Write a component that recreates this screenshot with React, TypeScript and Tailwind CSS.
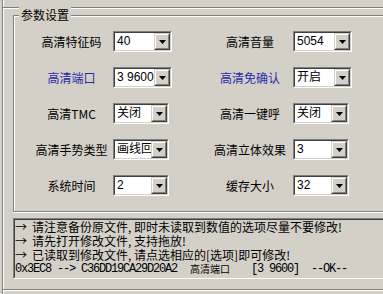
const cjk = "font-['Noto_Sans_CJK_SC',sans-serif]";

function Combo({ value, w }: { value: string; w: string }) {
  return (
    <div className={`${w} h-[21px] border border-t-[#808080] border-l-[#808080] border-b-white border-r-white`}>
      <div className="flex h-full border border-t-[#404040] border-l-[#404040] border-b-[#d4d0c8] border-r-[#d4d0c8] bg-white">
        <div className="flex-1 overflow-hidden whitespace-nowrap pl-[2px] text-[12px] leading-[17px] text-black font-['Liberation_Sans','Noto_Sans_CJK_SC',sans-serif]">
          {value}
        </div>
        <div className="w-[16px] h-full border border-t-[#d4d0c8] border-l-[#d4d0c8] border-b-[#404040] border-r-[#404040]">
          <div className="flex h-full items-center justify-center border border-t-white border-l-white border-b-[#808080] border-r-[#808080] bg-[#d4d0c8]">
            <svg width="7" height="4" viewBox="0 0 7 4">
              <polygon points="0,0 7,0 3.5,4" fill="#000" />
            </svg>
          </div>
        </div>
      </div>
    </div>
  );
}

function Label({ text, blue }: { text: string; blue?: boolean }) {
  return (
    <div
      className={`text-center text-[12px] leading-[21px] whitespace-nowrap ${cjk} ${
        blue ? "text-[#2a2aa8]" : "text-black"
      }`}
    >
      {text}
    </div>
  );
}

// half-width comma like the old SimSun rendering
const C = () => <span className="inline-block w-[6px]">,</span>;

const rows = [
  { l: "高清特征码", lv: "40", r: "高清音量", rv: "5054", w: "w-[59px]" },
  { l: "高清端口", lv: "3 9600", r: "高清免确认", rv: "开启", w: "w-[59px]", blue: true },
  { l: "高清TMC", lv: "关闭", r: "高清一键呼", rv: "关闭", w: "w-[56px]" },
  { l: "高清手势类型", lv: "画线回放", r: "高清立体效果", rv: "3", w: "w-[56px]" },
  { l: "系统时间", lv: "2", r: "缓存大小", rv: "32", w: "w-[56px]" },
];

export default function App() {
  return (
    <div className="w-[383px] h-[294px] overflow-hidden bg-[#d4d0c8] pl-[2px]">
      <div className="flex h-full flex-col border-l border-l-[#808080] shadow-[inset_1px_0_0_#fff]">
        <div className="h-[8px] shrink-0 border-b border-b-[#808080] shadow-[0_1px_0_#fff]" />

        {/* 参数设置 group */}
        <div className="relative ml-[10px] mt-[7px] h-[197px] shrink-0 border border-r-0 border-[#808080] shadow-[inset_1px_1px_0_#fff,0_1px_0_#fff]">
          <div className={`absolute left-[5px] top-[-9px] bg-[#d4d0c8] px-[2px] text-[12px] leading-[16px] text-black ${cjk}`}>
            参数设置
          </div>
          <div className="grid grid-cols-[83px_94px_86px_60px] gap-y-[15px] pl-[16px] pt-[15px]">
            {rows.map((r) => (
              <div key={r.l} className="contents">
                <Label text={r.l} blue={r.blue} />
                <Combo value={r.lv} w={r.w} />
                <Label text={r.r} blue={r.blue} />
                <Combo value={r.rv} w={r.w} />
              </div>
            ))}
          </div>
        </div>

        {/* message box */}
        <div className="ml-[10px] mt-[6px] h-[61px] shrink-0 border border-r-0 border-t-[#808080] border-l-[#808080] border-b-white">
          <div className={`h-full overflow-hidden border border-r-0 border-t-[#404040] border-l-[#404040] border-b-[#d4d0c8] text-[12px] leading-[14px] text-black ${cjk}`}>
            <div className="h-[14px] whitespace-nowrap">
              <span className="inline-block w-[17px]">→</span>请注意备份原文件<C />即时未读取到数值的选项尽量不要修改!
            </div>
            <div className="h-[14px] whitespace-nowrap">
              <span className="inline-block w-[17px]">→</span>请先打开修改文件<C />支持拖放!
            </div>
            <div className="h-[14px] whitespace-nowrap">
              <span className="inline-block w-[17px]">→</span>已读取到修改文件<C />请点选相应的[选项]即可修改!
            </div>
            <div className="flex h-[14px] items-center whitespace-pre text-[12px] tracking-[-1.2px] font-['Liberation_Mono','Noto_Sans_CJK_SC',monospace]">
              <span>0x3EC8 --&gt; C36DD19CA29D20A2</span>
              <span className={`ml-[13px] text-[10px] tracking-normal ${cjk}`}>高清端口</span>
              <span className="ml-[21px]">[3 9600]</span>
              <span className="ml-[12px]">--OK--</span>
            </div>
          </div>
        </div>

        <div className="mt-[10px] h-px shrink-0 bg-[#808080] shadow-[0_1px_0_#fff]" />
      </div>
    </div>
  );
}
